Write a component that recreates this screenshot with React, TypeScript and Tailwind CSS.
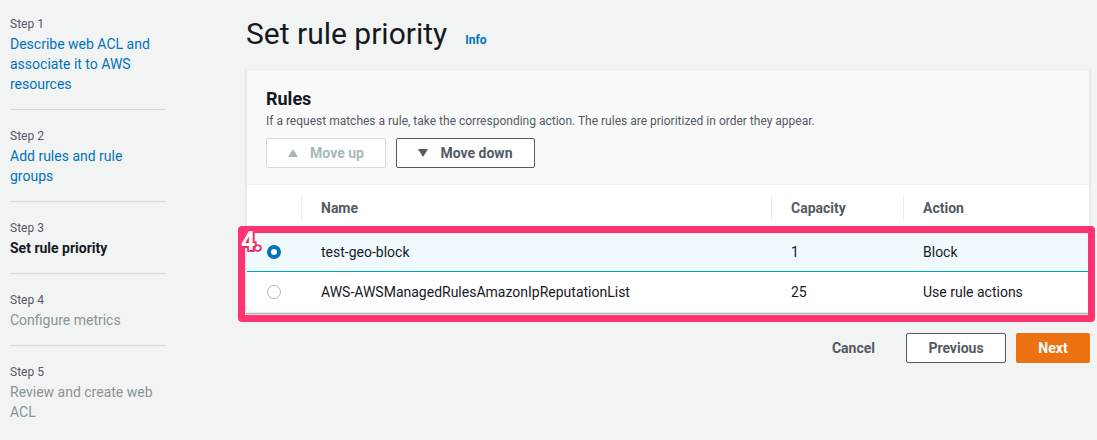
import React from 'react';

const font = { fontFamily: 'Roboto, "Liberation Sans", Arial, sans-serif' };

type Step = { n: number; label: string; state: 'link' | 'current' | 'disabled' };

const steps: Step[] = [
  { n: 1, label: 'Describe web ACL and associate it to AWS resources', state: 'link' },
  { n: 2, label: 'Add rules and rule groups', state: 'link' },
  { n: 3, label: 'Set rule priority', state: 'current' },
  { n: 4, label: 'Configure metrics', state: 'disabled' },
  { n: 5, label: 'Review and create web ACL', state: 'disabled' },
];

const rules = [
  { name: 'test-geo-block', capacity: '1', action: 'Block', selected: true },
  { name: 'AWS-AWSManagedRulesAmazonIpReputationList', capacity: '25', action: 'Use rule actions', selected: false },
];

const Sidebar: React.FC = () => (
  <nav className="w-[246px] shrink-0 pl-[10px]">
    <ul className="w-[156px]">
      {steps.map((s, i) => (
        <li
          key={s.n}
          className={`pb-[15px] ${i === 0 ? 'pt-[16px]' : 'pt-[18px]'} ${
            i < steps.length - 1 ? 'border-b border-[#d5dbdb]' : ''
          }`}
        >
          <div className="text-[12px] leading-[16px] text-[#545b64]">Step {s.n}</div>
          <div
            className={`mt-[2px] text-[14px] leading-[20px] ${
              s.state === 'link'
                ? 'text-[#0073bb]'
                : s.state === 'current'
                ? 'font-bold text-[#16191f]'
                : 'text-[#879596]'
            }`}
          >
            {s.label}
          </div>
        </li>
      ))}
    </ul>
  </nav>
);

const Radio: React.FC<{ checked: boolean }> = ({ checked }) =>
  checked ? (
    <span className="block h-[14px] w-[14px] rounded-full border-[4px] border-[#0073bb] bg-white" />
  ) : (
    <span className="block h-[14px] w-[14px] rounded-full border border-[#aab7b8] bg-white" />
  );

const HeaderCell: React.FC<{ children?: React.ReactNode; divider?: boolean }> = ({ children, divider }) => (
  <div className="relative flex h-[47px] items-center pl-5 text-[14px] font-bold text-[#545b64]">
    {divider && <span className="absolute left-0 top-[11px] h-[24px] w-px bg-[#eaeded]" />}
    {children}
  </div>
);

const App: React.FC = () => {
  return (
    <div className="flex h-[440px] w-[1097px] overflow-hidden bg-[#f2f3f3] text-[#16191f]" style={font}>
      <Sidebar />
      <main className="flex-1 pr-[7px] pt-4">
        <div className="flex items-baseline">
          <h1 className="text-[30px] font-normal leading-[36px] text-[#16191f]">Set rule priority</h1>
          <a className="ml-[18px] text-[12px] font-bold text-[#0073bb]">Info</a>
        </div>

        <section className="relative mt-[17px] border border-[#eaeded] bg-white shadow-[0_1px_1px_0_rgba(0,28,36,0.3)]">
          <div className="border-b border-[#eaeded] bg-[#fafafa] px-[19px] pb-4 pt-[18px]">
            <h2 className="text-[18px] font-bold leading-[22px]">Rules</h2>
            <p className="mt-[3px] text-[12px] leading-[16px] text-[#545b64]">
              If a request matches a rule, take the corresponding action. The rules are prioritized in order they appear.
            </p>
            <div className="mt-[9px] flex gap-[10px]">
              <button className="flex h-[30px] w-[120px] items-center justify-center gap-3 rounded-[2px] border border-[#d5dbdb] bg-white text-[14px] font-bold text-[#aab7b8]">
                <svg width="10" height="8" viewBox="0 0 10 8">
                  <path d="M5 0 L10 8 L0 8 Z" fill="#aab7b8" />
                </svg>
                Move up
              </button>
              <button className="flex h-[30px] w-[139px] items-center justify-center gap-3 rounded-[2px] border border-[#545b64] bg-white text-[14px] font-bold text-[#545b64]">
                <svg width="10" height="8" viewBox="0 0 10 8">
                  <path d="M0 0 L10 0 L5 8 Z" fill="#545b64" />
                </svg>
                Move down
              </button>
            </div>
          </div>

          <div className="grid grid-cols-[54px_470px_132px_1fr]">
            <HeaderCell />
            <HeaderCell divider>Name</HeaderCell>
            <HeaderCell divider>Capacity</HeaderCell>
            <HeaderCell divider>Action</HeaderCell>
          </div>

          {rules.map((r) => (
            <div
              key={r.name}
              className={`grid grid-cols-[54px_470px_132px_1fr] text-[14px] ${
                r.selected ? 'h-[40px] border-y border-y-[#00a1c9] border-t-[#eaeded] bg-[#f1faff]' : 'h-[40px] bg-white'
              }`}
            >
              <div className="flex items-center justify-center">
                <Radio checked={r.selected} />
              </div>
              <div className="flex items-center pl-5">{r.name}</div>
              <div className="flex items-center pl-5">{r.capacity}</div>
              <div className="flex items-center pl-5">{r.action}</div>
            </div>
          ))}

          {/* annotation overlay */}
          <div className="pointer-events-none absolute left-[-9px] top-[156px] h-[96px] w-[857px] rounded-[4px] border-[7px] border-[#ff3370]" />
          <span className="pointer-events-none absolute left-[-6px] top-[158px] text-[25px] font-bold leading-[28px] tracking-[-1px] text-white [-webkit-text-stroke:4px_#ff3370] [paint-order:stroke_fill] [text-shadow:1px_1px_1px_rgba(0,0,0,0.25)]">
            4.
          </span>
        </section>

        <div className="mt-[20px] flex items-center justify-end">
          <button className="mr-[31px] text-[14px] font-bold text-[#545b64]">Cancel</button>
          <button className="mr-[10px] h-[30px] w-[100px] rounded-[2px] border border-[#545b64] bg-white text-[14px] font-bold text-[#545b64]">
            Previous
          </button>
          <button className="h-[30px] w-[74px] rounded-[2px] bg-[#ec7211] text-[14px] font-bold text-white">Next</button>
        </div>
      </main>
    </div>
  );
};

export default App;
